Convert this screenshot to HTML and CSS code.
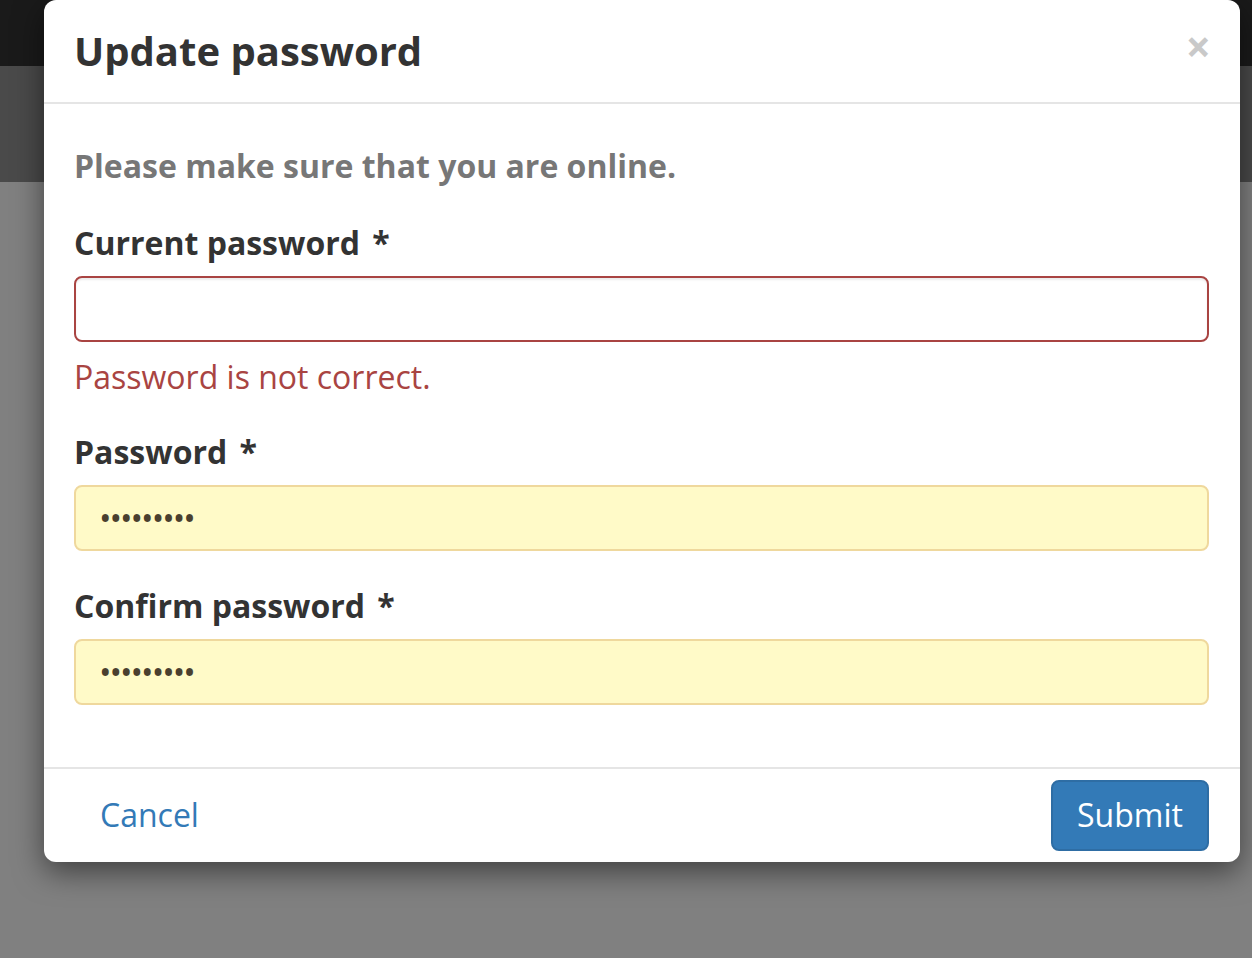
FILE: index.html
```html
<!DOCTYPE html>
<html lang="en">
<head>
<meta charset="utf-8">
<title>Update password</title>
<link rel="stylesheet" href="styles.css">
</head>
<body>
<div class="page">
  <div class="navbar"></div>
  <div class="hero"></div>
  <div class="rest"></div>
</div>
<div class="modal">
  <div class="modal-header">
    <h4 class="modal-title">Update password</h4>
    <button class="close" type="button" aria-label="Close">&times;</button>
  </div>
  <div class="modal-body">
    <p class="notice">Please make sure that you are online.</p>
    <div class="group">
      <label class="label" for="cur">Current password <span class="req">*</span></label>
      <input id="cur" class="input input-error" type="password">
      <div class="help">Password is not correct.</div>
    </div>
    <div class="group">
      <label class="label" for="pw">Password <span class="req">*</span></label>
      <div id="pw" class="input input-filled"><span class="dots">•••••••••</span></div>
    </div>
    <div class="group group-last">
      <label class="label" for="pw2">Confirm password <span class="req">*</span></label>
      <div id="pw2" class="input input-filled"><span class="dots">•••••••••</span></div>
    </div>
  </div>
  <div class="modal-footer">
    <button class="btn btn-link" type="button">Cancel</button>
    <button class="btn btn-primary" type="button">Submit</button>
  </div>
</div>
</body>
</html>
```

FILE: styles.css
```css
* { box-sizing: border-box; }
html, body { margin: 0; padding: 0; }
body {
  width: 1252px;
  height: 958px;
  overflow: hidden;
  font-family: "Open Sans", "Noto Sans", sans-serif;
  background: #808080;
  position: relative;
}
.page { display: flex; flex-direction: column; height: 958px; }
.navbar { height: 66px; background: #1a1a1a; }
.hero { height: 116px; background: #4a4a4a; }
.rest { flex: 1; background: #808080; }

.modal {
  position: absolute;
  left: 44px;
  top: 0;
  width: 1196px;
  height: 862px;
  background: #fff;
  border-radius: 12px;
  box-shadow: 0 10px 30px rgba(0,0,0,0.5);
  display: flex;
  flex-direction: column;
}
.modal-header {
  height: 104px;
  padding: 0 31px 0 30px;
  border-bottom: 2px solid #e5e5e5;
  display: flex;
  align-items: flex-start;
  justify-content: space-between;
}
.modal-title {
  margin: 0;
  padding-top: 25px;
  font-size: 40px;
  line-height: 52px;
  font-weight: 700;
  color: #333;
}
.close {
  margin-top: 20px;
  margin-right: -2px;
  padding: 0;
  border: 0;
  background: none;
  font-family: "Open Sans", sans-serif;
  font-size: 44px;
  line-height: 52px;
  font-weight: 700;
  color: #c9c9c9;
}
.modal-body {
  flex: 1;
  padding: 42px 31px 0 30px;
  display: flex;
  flex-direction: column;
}
.notice {
  margin: 0;
  font-size: 32px;
  line-height: 40px;
  font-weight: 700;
  color: #777;
}
.group { display: flex; flex-direction: column; }
.notice + .group { margin-top: 37px; }
.group + .group { margin-top: 35px; }
.label {
  font-size: 32px;
  line-height: 40px;
  font-weight: 700;
  color: #333;
  margin-bottom: 13px;
}
.req { margin-left: 4px; }
.input {
  height: 66px;
  width: 100%;
  border: 2px solid #ccc;
  border-radius: 8px;
  padding: 0 24px;
  font-family: "Open Sans", sans-serif;
  font-size: 28px;
  display: flex;
  align-items: center;
}
.input-error {
  border-color: #a94442;
  background: #fff;
  box-shadow: inset 0 2px 2px rgba(0,0,0,0.075);
}
.input-filled {
  background: #fffac8;
  border-color: #efd89d;
}
.dots {
  color: #4a3f2f;
  font-family: "Open Sans", sans-serif;
  font-weight: 600;
  font-size: 28px;
  letter-spacing: 0;
  line-height: 1;
}
.help {
  margin-top: 15px;
  font-size: 32px;
  line-height: 40px;
  color: #a94442;
}
.modal-footer {
  border-top: 2px solid #e5e5e5;
  padding: 10px 31px 11px 30px;
  display: flex;
  justify-content: space-between;
  align-items: center;
}
.btn {
  font-family: "Open Sans", sans-serif;
  font-size: 32px;
  line-height: 44px;
  border-radius: 8px;
  border: 2px solid transparent;
  cursor: pointer;
}
.btn-link {
  background: none;
  color: #337ab7;
  padding: 12px 24px;
}
.btn-primary {
  background: #337ab7;
  border-color: #2e6da4;
  color: #fff;
  width: 158px;
  height: 71px;
  padding: 0;
}
```
